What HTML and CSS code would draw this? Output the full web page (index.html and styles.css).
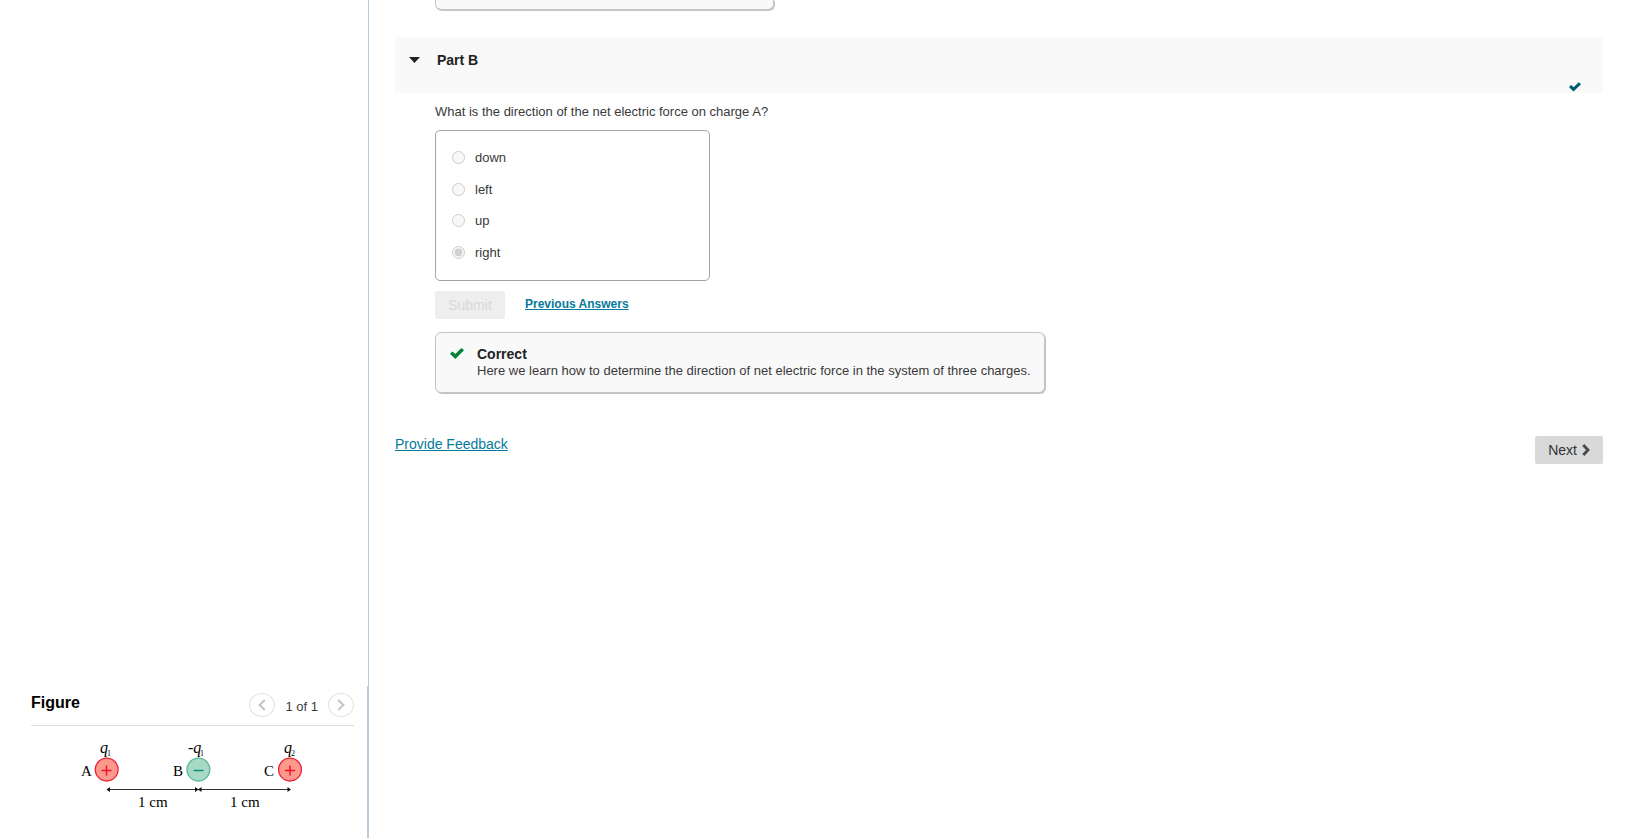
FILE: index.html
```html
<!DOCTYPE html>
<html lang="en">
<head>
<meta charset="utf-8">
<title>Part B</title>
<link rel="stylesheet" href="styles.css">
</head>
<body>
<div class="layout">
  <aside class="sidebar">
    <div class="sidebar-top"></div>
    <section class="figure-panel">
      <header class="figure-header">
        <h2 class="figure-title">Figure</h2>
        <div class="pager">
          <button class="pager-button" type="button" aria-label="Previous figure" disabled>
            <svg width="8" height="12" viewBox="0 0 8 12"><path d="M6.8 1 L1.6 6 L6.8 11" fill="none" stroke="#c4c4c4" stroke-width="2"/></svg>
          </button>
          <span class="pager-count">1 of 1</span>
          <button class="pager-button" type="button" aria-label="Next figure" disabled>
            <svg width="8" height="12" viewBox="0 0 8 12"><path d="M1.2 1 L6.4 6 L1.2 11" fill="none" stroke="#c4c4c4" stroke-width="2"/></svg>
          </button>
        </div>
      </header>
      <svg class="diagram" width="323" height="112" viewBox="0 0 323 112" role="img" aria-label="Three charges on a line, 1 cm apart">
        <g class="charge-name">
          <text x="69" y="27">q</text>
          <text x="157" y="27">-q</text>
          <text x="253" y="27">q</text>
        </g>
        <g class="charge-index">
          <text x="76" y="30">1</text>
          <text x="169" y="30">1</text>
          <text x="260" y="30">2</text>
        </g>
        <g class="diagram-label">
          <text x="50" y="50">A</text>
          <text x="142" y="50">B</text>
          <text x="233" y="50">C</text>
          <text x="107" y="81">1 cm</text>
          <text x="199" y="81">1 cm</text>
        </g>
        <g fill="#fb9a8c" stroke="#ee1c35" stroke-width="1.3">
          <circle cx="75.7" cy="43.600" r="11.4"/>
          <circle cx="259" cy="43.600" r="11.4"/>
        </g>
        <circle cx="167.4" cy="43.600" r="11.4" fill="#a6dac4" stroke="#56b796" stroke-width="1.3"/>
        <path d="M70.5 44.5h10M75.5 39.5v10M254 44.5h10M259 39.5v10" stroke="#f0122b" stroke-width="1.5"/>
        <path d="M162.5 44.5h10" stroke="#138a78" stroke-width="1.4"/>
        <path d="M77 63.5H258" stroke="#333" stroke-width="1"/>
        <path d="M75.5 63.5l3.5-2.5v5zM167.5 63.5l-3.500-2.500v5zM167 63.500l3.500-2.500v5zM260 63.500l-3.500-2.500v5z" fill="#111"/>
      </svg>
    </section>
  </aside>

  <main class="content">
    <div class="feedback-box previous-feedback"></div>

    <header class="part-header">
      <button class="part-toggle" type="button" aria-expanded="true" aria-label="Collapse Part B">
        <svg width="11" height="6" viewBox="0 0 11 6"><path d="M0 0h11L5.500 6z" fill="#222"/></svg>
      </button>
      <h2 class="part-title">Part B</h2>
      <svg class="part-check" width="12" height="10" viewBox="0 0 12 10" role="img" aria-label="Complete"><path d="M0 5L2.100 3 4.600 5.200 9.900.2 12 2.300 4.500 9.600z" fill="#005a70"/></svg>
    </header>

    <form class="part-body">
      <p class="question" id="question">What is the direction of the net electric force on charge A?</p>
      <div class="choices" role="radiogroup" aria-labelledby="question">
        <label class="choice"><input type="radio" name="direction" disabled>down</label>
        <label class="choice"><input type="radio" name="direction" disabled>left</label>
        <label class="choice"><input type="radio" name="direction" disabled>up</label>
        <label class="choice"><input type="radio" name="direction" disabled checked>right</label>
      </div>
      <div class="actions">
        <button class="button submit" type="submit" disabled>Submit</button>
        <a class="previous-answers" href="#">Previous Answers</a>
      </div>
      <div class="feedback-box result">
        <svg class="result-check" width="14" height="11" viewBox="0 0 14 11" aria-hidden="true"><path d="M0 5.800L2.400 3.400 5.300 6 11.500 0 14 2.300 5.300 10.900z" fill="#038238"/></svg>
        <div>
          <h3 class="result-title">Correct</h3>
          <p class="result-text">Here we learn how to determine the direction of net electric force in the system of three charges.</p>
        </div>
      </div>
    </form>

    <footer class="content-footer">
      <a class="provide-feedback" href="#">Provide Feedback</a>
      <button class="button next" type="button">Next
        <svg width="8" height="12" viewBox="0 0 8 12" aria-hidden="true"><path d="M1.300 1 L6 6 L1.300 11" fill="none" stroke="#4a4a4a" stroke-width="2.800"/></svg>
      </button>
    </footer>
  </main>
</div>
</body>
</html>
```

FILE: styles.css
```css
* { box-sizing: border-box; }

body {
  margin: 0;
  background: #fff;
  color: #3a3a3a;
  font: 13px/16px "Liberation Sans", Arial, sans-serif;
}

h2, h3, p { margin: 0; }

svg { display: block; flex: none; }

a { color: #047a9c; }

.layout {
  display: flex;
  min-height: 100vh;
}

/* Sidebar */
.sidebar {
  display: flex;
  flex: none;
  flex-direction: column;
  width: 369px;
}

.sidebar-top {
  flex: 1;
  border-right: 1px solid #b7cbdd;
}

.figure-panel {
  padding: 7px 13px 0 31px;
  border-right: 2px solid #b7cbdd;
}

.figure-header {
  display: flex;
  justify-content: space-between;
  height: 33px;
  border-bottom: 1px solid #ddd;
}

.figure-title {
  color: #000;
  font-size: 16px;
  line-height: 20px;
}

.pager {
  display: flex;
  gap: 10px;
  align-items: flex-start;
}

.pager-button {
  display: flex;
  align-items: center;
  justify-content: center;
  width: 26px;
  height: 24px;
  padding: 0;
  border: 1px solid #e2e2e2;
  border-radius: 50%;
  background: #fff;
}

.pager-count { padding-top: 6px; }

.diagram { font-family: "Liberation Serif", "Times New Roman", serif; }
.charge-name { font-size: 16px; font-style: italic; }
.charge-index { font-size: 8px; }
.diagram-label { font-size: 15px; }

/* Main column */
.content {
  flex: 1;
  padding: 0 24px 0 26px;
}

.feedback-box {
  border: 1px solid #c4c4c4;
  border-radius: 6px;
  background: #f9f9f9;
  box-shadow: 1px 1px 0 #c4c4c4;
}

.previous-feedback {
  width: 339px;
  height: 10px;
  margin-left: 40px;
  border-top: 0;
  border-radius: 0 0 6px 6px;
}

.part-header {
  display: flex;
  align-items: flex-start;
  height: 56px;
  margin-top: 27px;
  padding: 15px 22px 0 14px;
  background: #f9f9f9;
}

.part-toggle {
  margin: 5px 17px 0 0;
  padding: 0;
  border: 0;
  background: none;
}

.part-title {
  color: #222;
  font-size: 14px;
}

.part-check {
  align-self: flex-end;
  margin: 0 0 1px auto;
}

.part-body { padding: 11px 0 0 40px; }

.choices {
  display: flex;
  flex-direction: column;
  justify-content: space-between;
  width: 275px;
  height: 151px;
  margin-top: 10px;
  padding: 18px 16px 19px;
  border: 1px solid #a5a5a5;
  border-radius: 5px;
}

.choice {
  display: flex;
  gap: 10px;
  align-items: center;
  line-height: 17px;
}

.choice input { margin: 0; }

.actions {
  display: flex;
  gap: 20px;
  align-items: flex-start;
  margin-top: 10px;
}

.button {
  height: 28px;
  border: 0;
  border-radius: 2px;
  font: 14px/16px "Liberation Sans", Arial, sans-serif;
}

.submit {
  width: 70px;
  padding: 0;
  background: #eee;
  color: #d9d9d9;
}

.previous-answers {
  padding-top: 5px;
  font-size: 12px;
  font-weight: bold;
}

.result {
  display: flex;
  gap: 13px;
  width: fit-content;
  margin-top: 13px;
  padding: 13px 13px 13px 14px;
}

.result-check { margin-top: 2px; }

.result-title {
  color: #222;
  font-size: 14px;
  line-height: 17px;
}

.content-footer {
  display: flex;
  align-items: flex-start;
  justify-content: space-between;
  margin-top: 43px;
}

.provide-feedback { font-size: 14px; }

.next {
  display: flex;
  gap: 5px;
  align-items: center;
  padding: 0 13px;
  background: #d9d9d9;
  color: #333;
}
```
